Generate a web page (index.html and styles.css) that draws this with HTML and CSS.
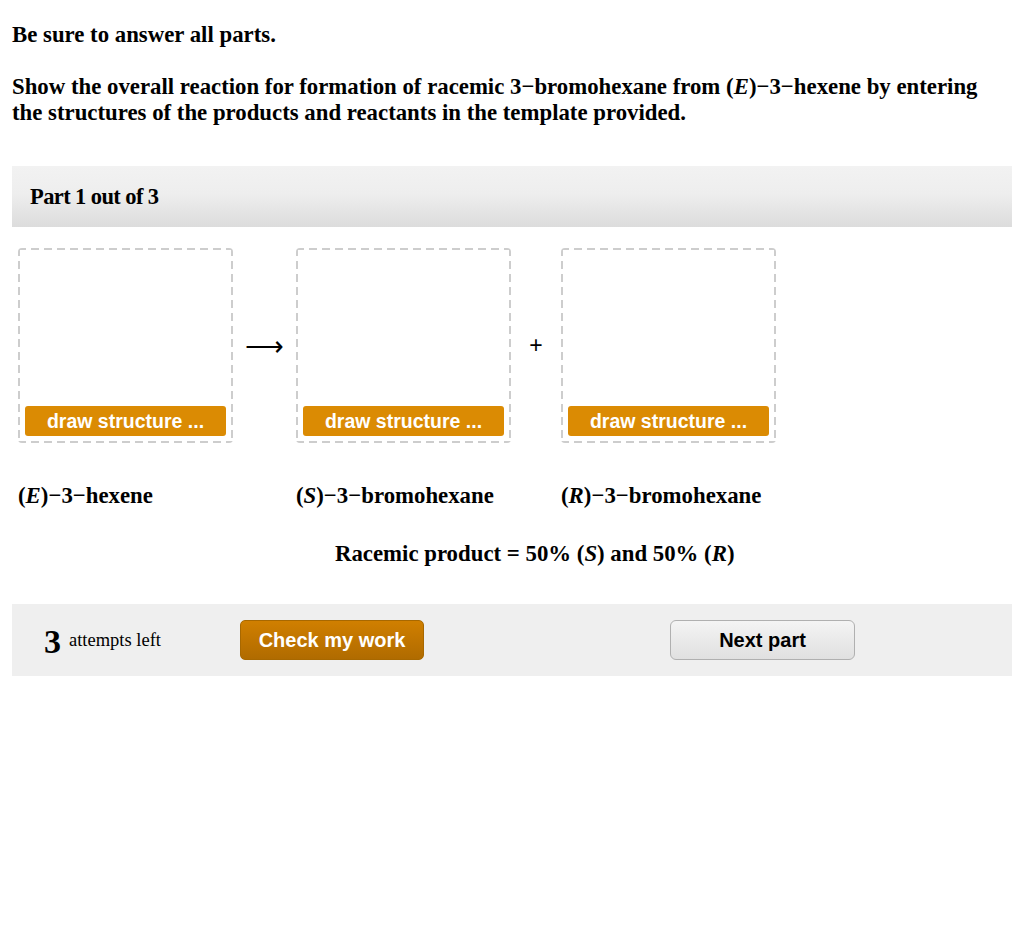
FILE: index.html
```html
<!DOCTYPE html>
<html>
<head>
<meta charset="utf-8">
<link rel="stylesheet" href="styles.css">
</head>
<body>
<div class="page">
  <p class="intro">Be sure to answer all parts.</p>
  <p class="question">Show the overall reaction for formation of racemic 3&minus;bromohexane from (<i>E</i>)&minus;3&minus;hexene by entering the structures of the products and reactants in the template provided.</p>

  <div class="part-header">Part 1 out of 3</div>

  <div class="reaction">
    <div class="slot">
      <div class="box"><button class="draw">draw structure ...</button></div>
      <div class="label">(<i>E</i>)&minus;3&minus;hexene</div>
    </div>
    <div class="op op-arrow">&#10230;</div>
    <div class="slot">
      <div class="box"><button class="draw">draw structure ...</button></div>
      <div class="label">(<i>S</i>)&minus;3&minus;bromohexane</div>
    </div>
    <div class="op op-plus">+</div>
    <div class="slot">
      <div class="box"><button class="draw">draw structure ...</button></div>
      <div class="label">(<i>R</i>)&minus;3&minus;bromohexane</div>
    </div>
  </div>

  <p class="racemic">Racemic product = 50% (<i>S</i>) and 50% (<i>R</i>)</p>

  <div class="footer">
    <div class="attempts"><span class="num">3</span><span class="att-text">attempts left</span></div>
    <button class="check">Check my work</button>
    <button class="next">Next part</button>
  </div>
</div>
</body>
</html>
```

FILE: styles.css
```css
html, body {
  margin: 0;
  padding: 0;
  background: #fff;
}
body {
  font-family: "Liberation Serif", "Times New Roman", serif;
  color: #000;
}
.page {
  width: 1000px;
  margin-left: 12px;
  padding-top: 22px;
}
.intro, .question {
  margin: 0;
  font-weight: bold;
  font-size: 22.8px;
  line-height: 26px;
}
.question {
  margin-top: 26px;
}
.part-header {
  margin-top: 40px;
  height: 61px;
  box-sizing: border-box;
  padding-left: 18px;
  display: flex;
  align-items: center;
  font-weight: bold;
  font-size: 22.5px;
  letter-spacing: -0.6px;
  background: linear-gradient(to bottom, #f2f2f2 0%, #eeeeee 45%, #dcdcdc 100%);
}
.reaction {
  display: flex;
  margin-top: 21px;
  padding-left: 6px;
}
.slot {
  width: 215px;
}
.box {
  height: 195px;
  box-sizing: border-box;
  border-radius: 4px;
  display: flex;
  align-items: flex-end;
  padding: 0 7px 7px 7px;
  background:
    repeating-linear-gradient(90deg, #cdcdcd 0 8px, transparent 8px 13px) left top / 100% 2px no-repeat,
    repeating-linear-gradient(90deg, #cdcdcd 0 8px, transparent 8px 13px) left bottom / 100% 2px no-repeat,
    repeating-linear-gradient(180deg, #cdcdcd 0 8px, transparent 8px 13px) left top / 2px 100% no-repeat,
    repeating-linear-gradient(180deg, #cdcdcd 0 8px, transparent 8px 13px) right top / 2px 100% no-repeat;
}
.draw {
  width: 100%;
  height: 30px;
  border: none;
  border-radius: 3px;
  background: #db8b03;
  color: #fff;
  font-family: "Liberation Sans", Arial, sans-serif;
  font-weight: bold;
  font-size: 19.5px;
  padding: 0;
  cursor: pointer;
}
.label {
  margin-top: 40px;
  font-weight: bold;
  font-size: 22.8px;
  line-height: 26px;
}
.op {
  height: 195px;
  display: flex;
  align-items: center;
  justify-content: center;
}
.op-arrow {
  width: 63px;
  font-size: 27px;
}
.op-plus {
  width: 50px;
  font-family: "Liberation Sans", Arial, sans-serif;
  font-size: 23px;
}
.racemic {
  margin: 32px 0 0 323px;
  font-weight: bold;
  font-size: 22.8px;
  line-height: 26px;
}
.footer {
  margin-top: 37px;
  height: 72px;
  background: #efefef;
  display: flex;
  align-items: center;
}
.attempts {
  width: 228px;
  padding-left: 32px;
  box-sizing: border-box;
  display: flex;
  align-items: center;
}
.num {
  font-size: 34px;
  font-weight: bold;
  line-height: 34px;
  margin-right: 8px;
  position: relative;
  top: 2px;
}
.att-text {
  font-size: 18.5px;
}
.check {
  width: 184px;
  height: 40px;
  border: 1px solid #a86800;
  border-radius: 5px;
  background: linear-gradient(to bottom, #d07f00, #b06b00);
  color: #fff;
  font-family: "Liberation Sans", Arial, sans-serif;
  font-weight: bold;
  font-size: 20px;
  padding: 0;
}
.next {
  margin-left: 246px;
  width: 185px;
  height: 40px;
  border: 1px solid #b0b0b0;
  border-radius: 6px;
  background: linear-gradient(to bottom, #f4f4f4, #e0e0e0);
  color: #000;
  font-family: "Liberation Sans", Arial, sans-serif;
  font-weight: bold;
  font-size: 20px;
  padding: 0;
}
```
